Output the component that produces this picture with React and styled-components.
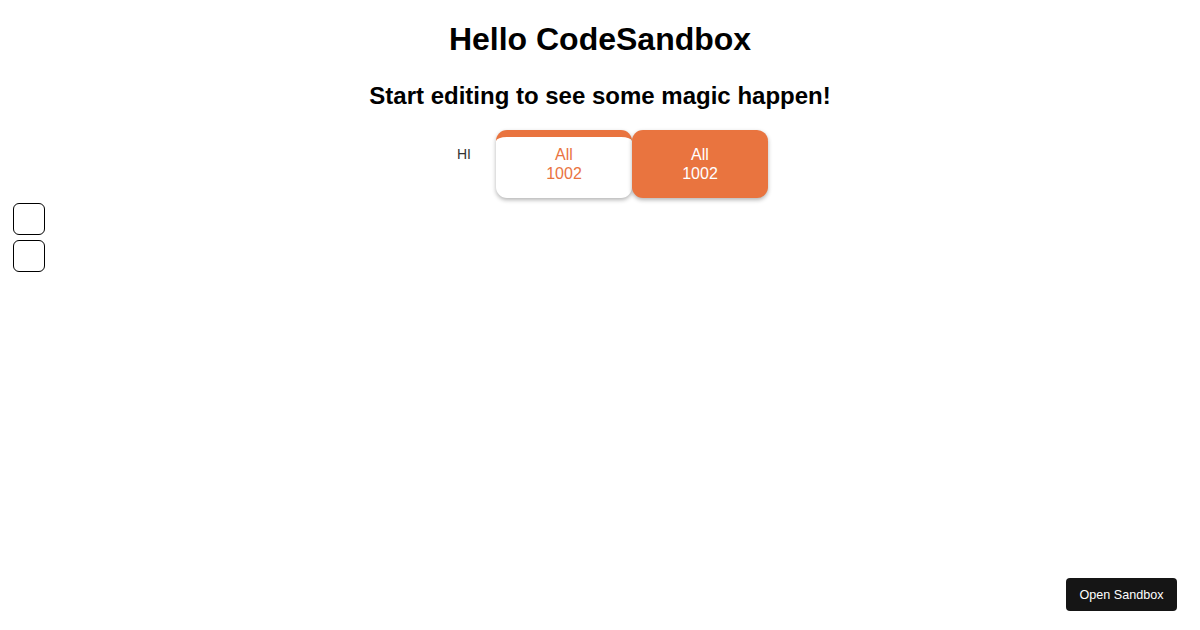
import React from "react";
import styled, { createGlobalStyle } from "styled-components";

const ORANGE = "#e9743f";

const Global = createGlobalStyle`
  html, body { background: #ffffff; }
  body {
    margin: 8px;
    font-family: "Liberation Sans", Arial, sans-serif;
    color: #000;
  }
`;

const AppWrap = styled.div`
  font-family: "Liberation Sans", Arial, sans-serif;
  text-align: center;
`;

const Title = styled.h1`
  font-size: 32px;
  font-weight: 700;
  margin: 13.44px 0 21.44px;
`;

const Subtitle = styled.h2`
  font-size: 24px;
  font-weight: 700;
  margin: 23.44px 0 0;
`;

const Row = styled.div`
  display: flex;
  justify-content: center;
  align-items: flex-start;
  margin-top: 19.7px;
`;

const Label = styled.div`
  width: 64px;
  height: 48px;
  display: flex;
  align-items: center;
  justify-content: center;
  font-size: 14px;
  font-weight: 400;
  color: #333;
`;

const Tab = styled.button`
  width: 136px;
  height: 68px;
  box-sizing: border-box;
  border: none;
  border-top: 7px solid ${ORANGE};
  border-radius: 11px;
  padding: 8.5px 0 0;
  display: flex;
  flex-direction: column;
  align-items: center;
  justify-content: flex-start;
  font-family: "Liberation Sans", Arial, sans-serif;
  font-size: 16px;
  font-weight: 400;
  line-height: 19px;
  background: ${(p) => (p.$active ? ORANGE : "#ffffff")};
  color: ${(p) => (p.$active ? "#ffffff" : ORANGE)};
  box-shadow: 0 2px 4px rgba(0, 0, 0, 0.3);
  cursor: pointer;
`;

const Square = styled.div`
  width: 32px;
  height: 32px;
  box-sizing: border-box;
  border: 1px solid #000;
  border-radius: 6px;
  margin: 5px;
`;

const OpenButton = styled.button`
  position: fixed;
  right: 23px;
  bottom: 19px;
  width: 111px;
  height: 33px;
  border: none;
  border-radius: 4px;
  background: #151515;
  color: #ffffff;
  font-family: "Liberation Sans", Arial, sans-serif;
  font-size: 12.6px;
  display: flex;
  align-items: center;
  justify-content: center;
  padding: 0;
  cursor: pointer;
`;

export default function App() {
  return (
    <>
      <Global />
      <AppWrap>
        <Title>Hello CodeSandbox</Title>
        <Subtitle>Start editing to see some magic happen!</Subtitle>
        <Row>
          <Label>HI</Label>
          <Tab>
            <span>All</span>
            <span>1002</span>
          </Tab>
          <Tab $active>
            <span>All</span>
            <span>1002</span>
          </Tab>
        </Row>
      </AppWrap>
      <Square />
      <Square />
      <OpenButton>Open Sandbox</OpenButton>
    </>
  );
}
